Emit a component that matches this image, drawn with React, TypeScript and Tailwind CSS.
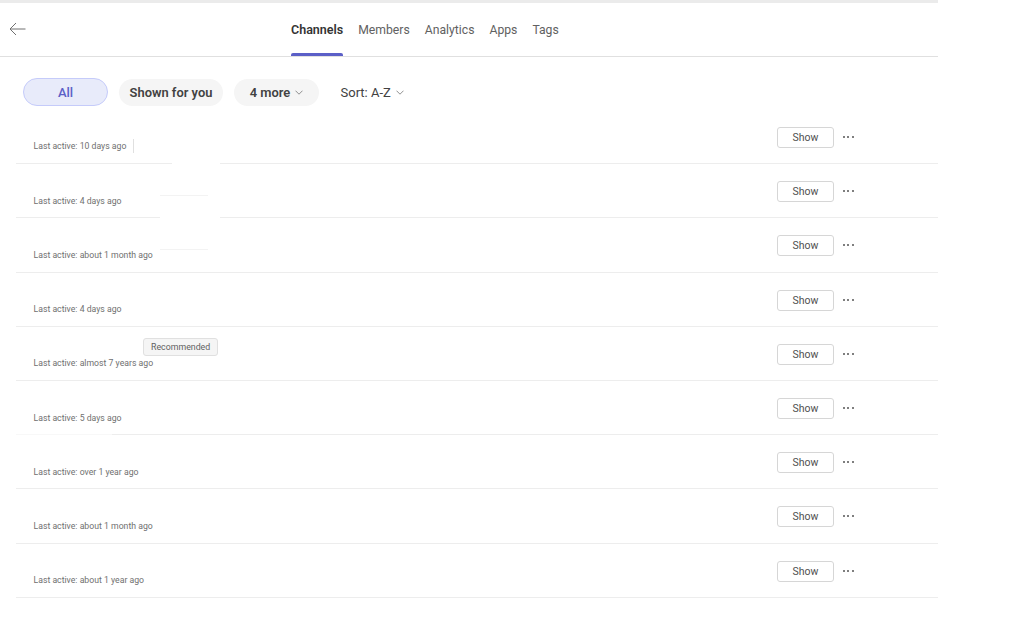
const channels = [
  { active: "10 days ago", divider: true },
  { active: "4 days ago" },
  { active: "about 1 month ago" },
  { active: "4 days ago" },
  { active: "almost 7 years ago", recommended: true },
  { active: "5 days ago" },
  { active: "over 1 year ago" },
  { active: "about 1 month ago" },
  { active: "about 1 year ago" },
];

const tabs = ["Channels", "Members", "Analytics", "Apps", "Tags"];

function Chevron() {
  return (
    <svg width="8" height="5" viewBox="0 0 8 5" fill="none" stroke="#757575" strokeWidth="0.8">
      <path d="M0.5 0.7 4 4.2 7.5 0.7" />
    </svg>
  );
}

function ChannelRow({ active, divider, recommended }: { active: string; divider?: boolean; recommended?: boolean }) {
  return (
    <div className="flex h-[54.2px] border-b border-[#ededed] pl-[17.5px]">
      <div className="flex w-[743.5px] flex-col justify-end pb-[10.5px]">
        <div className="flex items-center">
          <span className="text-[8.7px] leading-[12px] text-[#707070]">Last active: {active}</span>
          {divider && <span className="ml-[7px] h-[14px] w-px bg-[#e0e0e0]" />}
        </div>
      </div>
      <div className="flex items-start pt-[17px]">
        <button className="h-[21px] w-[57px] rounded-[3px] border border-[#d6d6d6] bg-white text-[10.5px] leading-[19px] text-[#505050]">
          Show
        </button>
        <span className="ml-[9px] flex h-[21px] w-[10.5px] items-start justify-between pt-[9px]">
          <i className="size-[2px] rounded-full bg-[#555555]" />
          <i className="size-[2px] rounded-full bg-[#555555]" />
          <i className="size-[2px] rounded-full bg-[#555555]" />
        </span>
      </div>
      {recommended && (
        <span className="absolute left-[143px] top-[338px] h-[18px] rounded-[3px] border border-[#e0e0e0] bg-[#f5f5f5] px-[7px] text-[8.8px] leading-[16px] text-[#616161]">
          Recommended
        </span>
      )}
    </div>
  );
}

export default function App() {
  return (
    <div className="relative h-[622px] w-[1024px] overflow-hidden bg-white font-['Roboto',sans-serif]">
      <div className="w-[938px]">
        <div className="h-[3px] bg-[#ebebeb]" />
        {/* Header */}
        <div className="flex h-[54px] border-b border-[#e0e0e0]">
          <div className="flex w-[291px] items-center pl-[9px] pb-[1px]">
            <svg width="17" height="14" viewBox="0 0 17 14" fill="none" stroke="#707070" strokeWidth="1">
              <path d="M16.5 7H1M7 1 1 7l6 6" />
            </svg>
          </div>
          <div className="flex gap-[15px]">
            {tabs.map((tab, i) => (
              <div key={tab} className="relative flex items-center pt-[2px]">
                <span className={i === 0 ? "text-[12.5px] font-semibold text-[#333333]" : "text-[12.2px] text-[#616161]"}>
                  {tab}
                </span>
                {i === 0 && <div className="absolute inset-x-0 bottom-0 h-[3px] rounded-t-[2px] bg-[#5b5fc7]" />}
              </div>
            ))}
          </div>
        </div>

        {/* Filters */}
        <div className="flex h-[53px] items-start pl-[23px] pt-[21px]">
          <button className="h-[28px] w-[85px] rounded-full border border-[#c5cbfa] bg-[#e8ebfa] pt-[1px] text-[13px] font-medium text-[#5b5fc7]">
            All
          </button>
          <button className="ml-[11px] mt-[1px] h-[27px] w-[104px] rounded-full bg-[#f5f5f5] text-[12.9px] font-semibold text-[#424242]">
            Shown for you
          </button>
          <button className="ml-[11px] mt-[1px] flex h-[27px] w-[85px] items-center justify-center gap-[5px] rounded-full bg-[#f5f5f5] text-[12.9px] font-semibold text-[#424242]">
            4 more
            <Chevron />
          </button>
          <button className="ml-[21.5px] mt-[1px] flex h-[27px] items-center gap-[5px] text-[13px] text-[#424242]">
            Sort: A-Z
            <Chevron />
          </button>
        </div>

        {/* Channel list */}
        <div className="ml-[16px]">
          {channels.map((c, i) => (
            <ChannelRow key={i} {...c} />
          ))}
        </div>
      </div>

      {/* leftover edges of the blanked-out channel names */}
      <div className="absolute left-[172px] top-[163px] h-[1px] w-[48px] bg-white" />
      <div className="absolute left-[160px] top-[195px] h-[1px] w-[48px] bg-[#f3f3f3]" />
      <div className="absolute left-[160px] top-[217px] h-[1px] w-[60px] bg-white" />
      <div className="absolute left-[160px] top-[249px] h-[1px] w-[48px] bg-[#f3f3f3]" />
      <div className="absolute left-[16px] top-[434px] h-[1px] w-[96px] bg-[#f8f8f8]" />
    </div>
  );
}
